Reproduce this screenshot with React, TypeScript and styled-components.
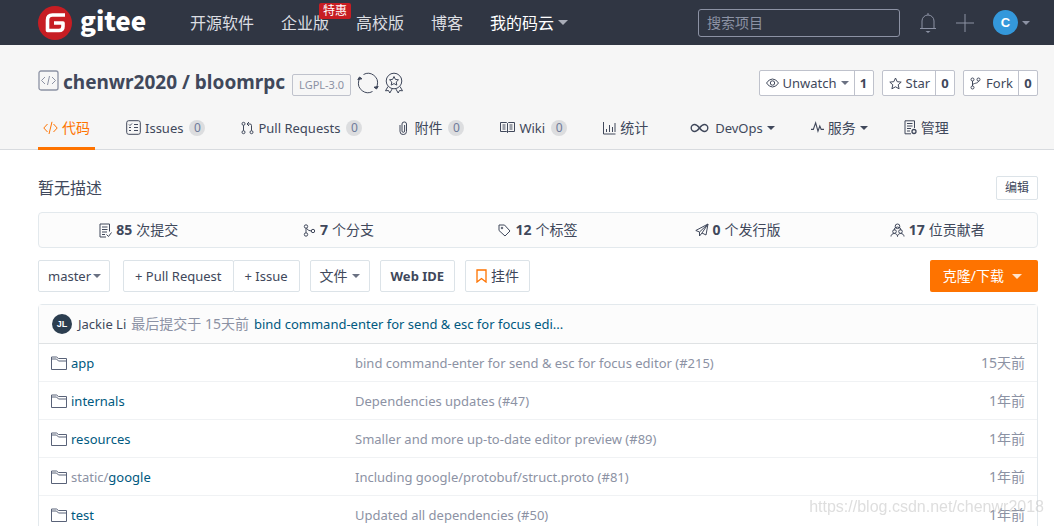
import React from "react";
import styled, { createGlobalStyle, css } from "styled-components";

const sans = `"Noto Sans", "Noto Sans CJK SC", sans-serif`;

const GlobalStyle = createGlobalStyle`
  * { box-sizing: border-box; }
  body {
    margin: 0;
    background: #fff;
    color: #40485b;
    font: 14px/20px ${sans};
  }
  h1, p { margin: 0; }
  a { color: inherit; text-decoration: none; }
  button, input, select { font: inherit; color: inherit; }
  svg { display: block; flex: none; }
`;

const Container = styled.div`
  padding: 0 16px 0 38px;
`;

/* ---------- top bar ---------- */

const TopBar = styled.header`
  display: flex;
  align-items: center;
  height: 45px;
  padding: 0 24px 0 38px;
  background: #303643;
`;

const Brand = styled.a`
  display: flex;
  align-items: center;
  gap: 8px;
  width: 152px;
  color: #fff;
`;

const Wordmark = styled.span`
  padding-bottom: 6px;
  font: 900 26px/36px "Noto Sans CJK SC", sans-serif;
`;

const MainNav = styled.nav`
  display: flex;
  align-items: center;
  gap: 27px;
  font-size: 16px;
  line-height: 24px;
  white-space: nowrap;
`;

const NavLink = styled.a<{ $current?: boolean }>`
  position: relative;
  display: flex;
  align-items: center;
  gap: 4px;
  color: ${(p) => (p.$current ? "#fff" : "#dcdee2")};
`;

const PromoBadge = styled.span`
  position: absolute;
  top: -8px;
  left: 38px;
  z-index: 1;
  padding: 0 4px;
  border-radius: 2px;
  background: #c71d23;
  color: #fff;
  font-size: 12px;
  line-height: 16px;
`;

const SearchInput = styled.input`
  width: 202px;
  height: 28px;
  margin-left: auto;
  padding: 0 8px;
  border: 1px solid #8c92a4;
  border-radius: 3px;
  background: transparent;
  color: #fff;
  &::placeholder { color: #8c92a4; opacity: 1; }
`;

const PlainButton = styled.button`
  display: flex;
  align-items: center;
  gap: 4px;
  padding: 0;
  border: 0;
  background: none;
  color: #8c92a4;
`;

const UserTools = styled.div`
  display: flex;
  align-items: center;
  gap: 19px;
  margin-left: 19px;
`;

const Avatar = styled.span<{ $size: number; $color: string }>`
  display: grid;
  place-items: center;
  flex: none;
  width: ${(p) => p.$size}px;
  height: ${(p) => p.$size}px;
  border-radius: 50%;
  background: ${(p) => p.$color};
  color: #fff;
  font: 700 ${(p) => (p.$size > 20 ? 13 : 9)}px/1 "Liberation Sans", sans-serif;
`;

const Caret = styled.span<{ $color?: string; $size?: number }>`
  flex: none;
  width: 0;
  height: 0;
  border: ${(p) => p.$size ?? 4}px solid transparent;
  border-top-color: ${(p) => p.$color ?? "currentColor"};
  border-bottom: 0;
`;

/* ---------- repository heading ---------- */

const RepoHead = styled.section`
  border-bottom: 1px solid #d8dbdf;
  background: #f6f6f6;
`;

const TitleRow = styled.div`
  display: flex;
  align-items: center;
  justify-content: space-between;
  padding-top: 25px;
`;

const Title = styled.div`
  display: flex;
  align-items: flex-start;
  gap: 4px;
  height: 26px;
`;

const RepoName = styled.h1`
  margin-right: 3px;
  font-size: 19px;
  line-height: 24px;
  font-weight: 700;
  white-space: nowrap;
`;

const License = styled.a`
  align-self: flex-end;
  padding: 0 6px;
  border: 1px solid #bfc2cc;
  border-radius: 2px;
  color: #8c92a4;
  font-size: 11px;
  line-height: 20px;
`;

const TitleIcons = styled.span`
  display: flex;
  align-self: center;
  gap: 5px;
  margin-left: 2px;
`;

const RepoActions = styled.div`
  display: flex;
  gap: 8px;
`;

const CountGroup = styled.div`
  display: flex;
  height: 26px;
  border: 1px solid #bfc2cc;
  border-radius: 2px;
  background: #fff;
  font-size: 13px;
`;

const CountAction = styled.button`
  display: flex;
  align-items: center;
  gap: 4px;
  padding: 0 5px 0 6px;
  border: 0;
  background: none;
  white-space: nowrap;
`;

const Count = styled.a`
  min-width: 19px;
  border-left: 1px solid #bfc2cc;
  font-weight: 700;
  line-height: 24px;
  text-align: center;
`;

const Tabs = styled.nav`
  display: flex;
  gap: 26px;
  margin: 12px 0 -1px;
`;

const Tab = styled.a<{ $active?: boolean; $latin?: boolean }>`
  display: flex;
  align-items: center;
  gap: 4px;
  height: 42px;
  padding: 0 5px;
  border-bottom: 3px solid ${(p) => (p.$active ? "#fe7300" : "transparent")};
  color: ${(p) => (p.$active ? "#fe7300" : "inherit")};
  font-size: ${(p) => (p.$latin ? 13 : 14)}px;
  white-space: nowrap;
`;

const Bubble = styled.span`
  min-width: 16px;
  margin-left: 2px;
  border-radius: 8px;
  background: #dcdddf;
  color: #6e7a9a;
  font-size: 12px;
  line-height: 16px;
  text-align: center;
`;

/* ---------- summary ---------- */

const DescRow = styled.div`
  display: flex;
  align-items: center;
  justify-content: space-between;
  padding: 26px 0 12px;
  font-size: 16px;
`;

const buttonBox = css`
  display: flex;
  align-items: center;
  justify-content: center;
  border: 1px solid #dce3e8;
  border-radius: 2px;
  background: #fff;
  white-space: nowrap;
`;

const SmallButton = styled.button`
  ${buttonBox}
  height: 24px;
  padding: 0 8px;
  font-size: 12px;
`;

const Stats = styled.div`
  display: grid;
  grid-template-columns: repeat(5, 1fr);
  border: 1px solid #e3e9ed;
  border-radius: 4px;
  background: #fcfcfc;
`;

const Stat = styled.a`
  display: flex;
  align-items: center;
  justify-content: center;
  gap: 4px;
  height: 34px;
`;

const Toolbar = styled.div`
  display: flex;
  gap: 10px;
  padding: 12px 0;
`;

const ToolButton = styled.button<{ $bold?: boolean; $latin?: boolean; $menu?: boolean }>`
  ${buttonBox}
  gap: 4px;
  height: 32px;
  padding: 0 ${(p) => (p.$menu ? 9 : 10)}px;
  font-size: ${(p) => (p.$latin ? 13 : 14)}px;
  font-weight: ${(p) => (p.$bold ? 700 : 400)};
`;

const BranchPicker = styled.label`
  position: relative;
  display: flex;
  align-items: center;
  margin-right: 3px;
`;

const BranchSelect = styled.select`
  width: 72px;
  height: 32px;
  padding: 0 9px;
  border: 1px solid #dce3e8;
  border-radius: 2px;
  background: #fff;
  font-size: 13px;
  appearance: none;
`;

const BranchCaret = styled(Caret)`
  position: absolute;
  right: 9px;
  pointer-events: none;
`;

const ButtonGroup = styled.div`
  display: flex;
  & > button { padding: 0 11px; }
  & > button + button { margin-left: -1px; }
`;

const CloneButton = styled.button`
  display: flex;
  align-items: center;
  gap: 8px;
  height: 32px;
  margin-left: auto;
  padding: 0 16px 0 13px;
  border: 0;
  border-radius: 2px;
  background: #fe7300;
  color: #fff;
`;

/* ---------- file list ---------- */

const FileCard = styled.section`
  border: 1px solid #e3e9ed;
  border-radius: 4px;
`;

const LastCommit = styled.div`
  display: flex;
  align-items: center;
  gap: 5px;
  height: 39px;
  padding: 0 13px;
  border-bottom: 1px solid #dfe2e4;
  background: #fcfcfc;
  white-space: nowrap;
`;

const Muted = styled.span`
  color: #8c92a4;
`;

const BlueLink = styled.a`
  color: #005980;
  font-size: 13px;
`;

const Committer = styled.a`
  display: flex;
  gap: 6px;
  align-items: center;
  font-size: 13px;
`;

const FileTable = styled.table`
  width: 100%;
  border-spacing: 0;
  table-layout: fixed;
`;

const Cell = styled.td<{ $width?: number; $right?: boolean }>`
  width: ${(p) => (p.$width ? `${p.$width}px` : "auto")};
  height: 38px;
  border-bottom: 1px solid #f0f2f4;
  padding: 0 ${(p) => (p.$right ? 12 : 0)}px 0 0;
  color: #8c92a4;
  font-size: ${(p) => (p.$right ? 14 : 13)}px;
  text-align: ${(p) => (p.$right ? "right" : "left")};
  white-space: nowrap;
`;

const FileName = styled.span`
  display: flex;
  align-items: center;
  gap: 4px;
  padding-left: 12px;
`;

const Watermark = styled.p`
  position: fixed;
  right: 10px;
  bottom: 9px;
  color: rgba(190, 190, 190, 0.5);
  font: 16px/20px "Liberation Sans", sans-serif;
  pointer-events: none;
`;

/* ---------- icons ---------- */

type IconProps = { w?: number; h?: number; box?: string; color?: string; children: React.ReactNode };

const Icon = ({ w = 14, h = 14, box, color = "currentColor", children }: IconProps) => (
  <svg width={w} height={h} viewBox={box ?? `0 0 ${w} ${h}`} fill="none" stroke={color} strokeWidth="1" aria-hidden="true">
    {children}
  </svg>
);

const LogoMark = () => (
  <svg width="34" height="34" viewBox="0 0 34 34" aria-hidden="true">
    <circle cx="17" cy="17" r="17" fill="#c71d23" />
    <path d="M27 9H14.500Q9.500 9 9.500 14V24.500H21Q25 24.500 25 20.500V17H16" fill="none" stroke="#fff" strokeWidth="3.600" strokeLinejoin="round" />
  </svg>
);

const BellIcon = () => (
  <Icon w={18} h={22}>
    <path d="M3 16.500V9a6 6 0 0 1 12 0v7.500M1 16.500h16M9 1v2" />
    <path d="M6.500 19h5L9 21Z" fill="currentColor" stroke="none" />
  </Icon>
);
const PlusIcon = () => <Icon w={18} h={18}><path d="M9 0v18M0 9h18" /></Icon>;
const RepoIcon = () => (
  <Icon w={21} h={21} color="#8c92a4">
    <rect x="1" y="1" width="19" height="19" rx="2" strokeWidth="1.300" />
    <path d="M7 7l-3.500 3.500L7 14M14 7l3.500 3.500L14 14M11.500 6l-2 9" />
  </Icon>
);
const SyncIcon = () => (
  <Icon w={22} h={22}>
    <path d="M6.500 2.500A9.500 9.500 0 0 1 20.300 13M15.500 19.500A9.500 9.500 0 0 1 1.700 9" />
    <path d="M.8 7.500L2.500 5l2.500 1.800Z M21.200 14.500L19.500 17l-2.500-1.800Z" fill="currentColor" />
    <path d="M1.700 9l.8-3M20.300 13l-.8 3" />
  </Icon>
);
const MedalIcon = () => (
  <Icon w={20} h={22}>
    <circle cx="10" cy="9" r="7.800" />
    <path d="M10 4.500l1.400 2.900 3.100.4-2.300 2.200.6 3.100-2.800-1.500-2.800 1.500.6-3.100-2.300-2.200 3.100-.4ZM4 14.500l-2.500 4.300 3-.3 1.300 2.500 2.500-4.300M16 14.500l2.500 4.300-3-.3-1.300 2.500-2.500-4.300" />
  </Icon>
);
const EyeIcon = () => (
  <Icon w={13} h={12}>
    <path d="M.5 6Q3 2 6.500 2T12.500 6Q10 10 6.500 10T.5 6Z" />
    <circle cx="6.500" cy="6" r="2.200" />
  </Icon>
);
const StarIcon = () => <Icon w={13} h={13}><path d="M6.500 1l1.700 3.700 4 .4-3 2.700.9 4-3.600-2-3.600 2 .9-4-3-2.700 4-.4Z" /></Icon>;
const ForkIcon = () => (
  <Icon w={12} h={13}>
    <circle cx="2.500" cy="2.500" r="1.500" /><circle cx="2.500" cy="10.500" r="1.500" /><circle cx="8.500" cy="2.500" r="1.500" />
    <path d="M2.500 4v5M8.500 4c0 3-6 1.500-6 4.500" />
  </Icon>
);
const CodeIcon = () => <Icon w={15} h={14}><path d="M4.500 3L.8 7l3.700 4M10.500 3l3.700 4-3.700 4M9 .8L6 13" /></Icon>;
const IssueIcon = () => (
  <Icon w={15} h={15}>
    <rect x=".7" y=".7" width="13.600" height="13.600" rx="2" />
    <path d="M3 4.500l1 1 2-2M8 4.500h4M8 7.500h4M8 10.500h4M3 10.500h2M3 7.500h2" />
  </Icon>
);
const PullIcon = () => (
  <Icon w={13} h={14}>
    <circle cx="2.500" cy="2.800" r="1.500" /><circle cx="2.500" cy="11.200" r="1.500" /><circle cx="10.500" cy="11.200" r="1.500" />
    <path d="M2.500 4.300v5.400M10.500 9.700V4.500a1.500 1.500 0 0 0-1.500-1.500H6.500M8 1L6 3l2 2" />
  </Icon>
);
const ClipIcon = () => <Icon w={12} h={14}><path d="M2 4v6.500a3.200 3 0 0 0 6.500 0V3a2.200 2 0 0 0-4.500 0v7a1.300 1.300 0 0 0 2.600 0V4" /></Icon>;
const BookIcon = () => <Icon w={15} h={13}><path d="M.5 1.500h6l1 1 1-1h6v9h-6l-1 1-1-1h-6ZM7.500 2.500v9M2.500 4h3M2.500 6h3M2.500 8h3M9.500 4h3M9.500 6h3M9.500 8h3" /></Icon>;
const ChartIcon = () => <Icon w={13} h={14}><path d="M.5 1v12h12M3.500 11V8M6.500 11V4M9.500 11V6M12 11V2" /></Icon>;
const InfinityIcon = () => <Icon w={27} h={12} box="-6 0 27 12"><path d="M9.500 6C7.500 3.500 6.500 2.500 4.700 2.500a3.500 3.500 0 0 0 0 7c1.800 0 2.800-1 4.800-3.500s3-3.500 4.800-3.500a3.500 3.500 0 0 1 0 7c-1.800 0-2.800-1-4.800-3.500Z" strokeWidth="1.400" /></Icon>;
const PulseIcon = () => <Icon w={13} h={13} box="0 0 14 13"><path d="M0 8.500h2.500L5 1.500l2.500 9L9.500 5l1.500 3.500h3" strokeWidth="1.200" /></Icon>;
const ManageIcon = () => (
  <Icon w={13} h={15}>
    <path d="M10.500 8V.8H1v13h6M3 3.500h5.500M3 6h5.500M3 8.500h4M3 11h3" />
    <circle cx="10" cy="11.500" r="2" strokeWidth="1.300" />
  </Icon>
);
const CommitIcon = () => <Icon w={13} h={15}><path d="M10.500 8.500V1H1v13h6M3 4h5.500M3 6.500h5.500M3 9h5M3 11.500h3M7.500 11.500l2 2 3-4" /></Icon>;
const BranchIcon = () => (
  <Icon w={13} h={13}>
    <circle cx="3" cy="2.500" r="1.700" /><circle cx="3" cy="10.500" r="1.700" /><circle cx="10" cy="7" r="1.700" />
    <path d="M3 4.200v4.600M3.500 4.200Q5 7 8.300 7" />
  </Icon>
);
const TagIcon = () => (
  <Icon w={13} h={13}>
    <path d="M1 1h5.500L12 7l-5 5L1 6.500Z" />
    <circle cx="4" cy="4" r=".8" />
  </Icon>
);
const PlaneIcon = () => <Icon w={14} h={14}><path d="M13 1L.8 7.500 4.500 9 13 1l-2 11-4-2-2.500 3V9M7 10L13 1" /></Icon>;
const PeopleIcon = () => (
  <Icon w={15} h={14}>
    <circle cx="7.500" cy="3.300" r="2.300" />
    <path d="M4 7.500a3.500 3.500 0 0 1 7 0" />
    <circle cx="4.500" cy="8.500" r="1.800" /><circle cx="10.500" cy="8.500" r="1.800" />
    <path d="M1 13.500c0-4 6.500-4 6.500 0 0-4 6.500-4 6.500 0" />
  </Icon>
);
const WidgetIcon = () => <Icon w={11} h={14} color="#fe7300"><path d="M1 1h9v12L5.500 9.500 1 13Z" strokeWidth="1.300" /></Icon>;
const FolderIcon = () => <Icon w={16} h={14} color="#596278"><path d="M.5 13.500V1h5l2 1.500h8v11ZM.5 3h5l2 2h8" /></Icon>;

/* ---------- data ---------- */

const tabs = [
  { label: "代码", icon: <CodeIcon />, active: true },
  { label: "Issues", icon: <IssueIcon />, count: 0, latin: true },
  { label: "Pull Requests", icon: <PullIcon />, count: 0, latin: true },
  { label: "附件", icon: <ClipIcon />, count: 0 },
  { label: "Wiki", icon: <BookIcon />, count: 0, latin: true },
  { label: "统计", icon: <ChartIcon /> },
  { label: "DevOps", icon: <InfinityIcon />, menu: true, latin: true },
  { label: "服务", icon: <PulseIcon />, menu: true },
  { label: "管理", icon: <ManageIcon /> },
];

const stats = [
  { value: 85, label: "次提交", icon: <CommitIcon /> },
  { value: 7, label: "个分支", icon: <BranchIcon /> },
  { value: 12, label: "个标签", icon: <TagIcon /> },
  { value: 0, label: "个发行版", icon: <PlaneIcon /> },
  { value: 17, label: "位贡献者", icon: <PeopleIcon /> },
];

const files = [
  { name: "app", message: "bind command-enter for send & esc for focus editor (#215)", time: "15天前" },
  { name: "internals", message: "Dependencies updates (#47)", time: "1年前" },
  { name: "resources", message: "Smaller and more up-to-date editor preview (#89)", time: "1年前" },
  { parent: "static/", name: "google", message: "Including google/protobuf/struct.proto (#81)", time: "1年前" },
  { name: "test", message: "Updated all dependencies (#50)", time: "1年前" },
];

export default function App() {
  return (
    <>
      <GlobalStyle />
      <TopBar>
        <Brand href="#"><LogoMark /><Wordmark>gitee</Wordmark></Brand>
        <MainNav>
          <NavLink href="#">开源软件</NavLink>
          <NavLink href="#">企业版<PromoBadge>特惠</PromoBadge></NavLink>
          <NavLink href="#">高校版</NavLink>
          <NavLink href="#">博客</NavLink>
          <NavLink href="#" $current>我的码云<Caret $color="#a9adb8" $size={5} /></NavLink>
        </MainNav>
        <SearchInput type="search" aria-label="搜索项目" placeholder="搜索项目" />
        <UserTools>
          <PlainButton aria-label="通知"><BellIcon /></PlainButton>
          <PlainButton aria-label="新建"><PlusIcon /></PlainButton>
          <PlainButton aria-label="账户"><Avatar $size={25} $color="#3498db">C</Avatar><Caret /></PlainButton>
        </UserTools>
      </TopBar>

      <RepoHead>
        <Container>
          <TitleRow>
            <Title>
              <RepoIcon />
              <RepoName><a href="#">chenwr2020</a> / <a href="#">bloomrpc</a></RepoName>
              <License href="#">LGPL-3.0</License>
              <TitleIcons><SyncIcon /><MedalIcon /></TitleIcons>
            </Title>
            <RepoActions>
              <CountGroup><CountAction><EyeIcon />Unwatch<Caret $color="#6a7182" /></CountAction><Count href="#">1</Count></CountGroup>
              <CountGroup><CountAction><StarIcon />Star</CountAction><Count href="#">0</Count></CountGroup>
              <CountGroup><CountAction><ForkIcon />Fork</CountAction><Count href="#">0</Count></CountGroup>
            </RepoActions>
          </TitleRow>
          <Tabs>
            {tabs.map((t) => (
              <Tab key={t.label} href="#" $active={t.active} $latin={t.latin}>
                {t.icon}{t.label}
                {t.count !== undefined && <Bubble>{t.count}</Bubble>}
                {t.menu && <Caret />}
              </Tab>
            ))}
          </Tabs>
        </Container>
      </RepoHead>

      <Container as="main">
        <DescRow><p>暂无描述</p><SmallButton>编辑</SmallButton></DescRow>
        <Stats>
          {stats.map((s) => (
            <Stat key={s.label} href="#">{s.icon}<strong>{s.value}</strong>{s.label}</Stat>
          ))}
        </Stats>
        <Toolbar>
          <BranchPicker>
            <BranchSelect aria-label="分支"><option>master</option></BranchSelect>
            <BranchCaret $color="#6a7182" />
          </BranchPicker>
          <ButtonGroup>
            <ToolButton $latin>+ Pull Request</ToolButton>
            <ToolButton $latin>+ Issue</ToolButton>
          </ButtonGroup>
          <ToolButton $menu>文件<Caret $color="#6a7182" /></ToolButton>
          <ToolButton $latin $bold>Web IDE</ToolButton>
          <ToolButton><WidgetIcon />挂件</ToolButton>
          <CloneButton>克隆/下载<Caret $size={5} $color="#ffe3cc" /></CloneButton>
        </Toolbar>
        <FileCard>
          <LastCommit>
            <Committer href="#"><Avatar $size={20} $color="#2c3e50">JL</Avatar>Jackie Li</Committer>
            <Muted>最后提交于 15天前</Muted>
            <BlueLink href="#">bind command-enter for send &amp; esc for focus edi...</BlueLink>
          </LastCommit>
          <FileTable>
            <tbody>
              {files.map((f) => (
                <tr key={f.name}>
                  <Cell $width={316}>
                    <FileName><FolderIcon /><BlueLink href="#">{f.parent && <Muted>{f.parent}</Muted>}{f.name}</BlueLink></FileName>
                  </Cell>
                  <Cell>{f.message}</Cell>
                  <Cell $width={100} $right>{f.time}</Cell>
                </tr>
              ))}
            </tbody>
          </FileTable>
        </FileCard>
      </Container>
      <Watermark>https://blog.csdn.net/chenwr2018</Watermark>
    </>
  );
}
